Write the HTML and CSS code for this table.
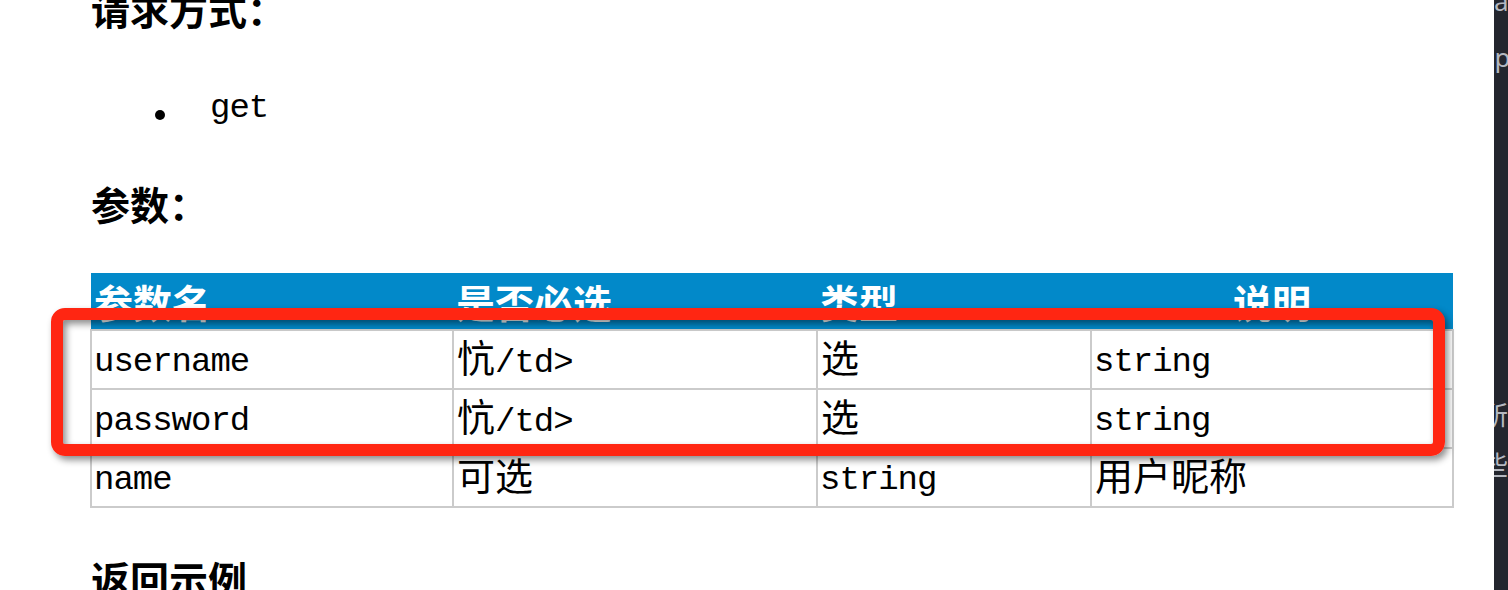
FILE: index.html
```html
<!DOCTYPE html>
<html lang="zh">
<head>
<meta charset="utf-8">
<title>接口文档</title>
<link rel="stylesheet" href="styles.css">
</head>
<body>
<div class="page">
  <main class="doc">
    <h3 class="h h-first">请求方式：</h3>
    <ul class="list"><li>get</li></ul>
    <h3 class="h h-params">参数：</h3>
    <table class="params">
      <colgroup>
        <col class="c1"><col class="c2"><col class="c3"><col class="c4">
      </colgroup>
      <thead>
        <tr><th>参数名</th><th>是否必选</th><th>类型</th><th class="center">说明</th></tr>
      </thead>
      <tbody>
        <tr><td>username</td><td><span class="zh">忼</span>/td&gt;</td><td><span class="zh">选</span></td><td>string</td></tr>
        <tr><td>password</td><td><span class="zh">忼</span>/td&gt;</td><td><span class="zh">选</span></td><td>string</td></tr>
        <tr><td>name</td><td><span class="zh">可选</span></td><td>string</td><td><span class="zh">用户昵称</span></td></tr>
      </tbody>
    </table>
    <h3 class="h h-return">返回示例</h3>
  </main>
  <aside class="side">
    <div class="side-line l1">ba</div>
    <div class="side-line l2">ap</div>
    <div class="side-line l3">所</div>
    <div class="side-line l4">些</div>
  </aside>
</div>
<div class="mark"></div>
</body>
</html>
```

FILE: styles.css
```css
html, body {
  margin: 0;
  padding: 0;
  background: #ffffff;
}

body {
  width: 1508px;
  height: 590px;
  overflow: hidden;
  position: relative;
  font-family: "Liberation Mono", "Noto Sans CJK SC", monospace;
  color: #000;
}

.page {
  display: flex;
  height: 590px;
}

.doc {
  flex: 1;
  padding-left: 90px;
  min-width: 0;
}

.h {
  margin: 0 0 0 1px;
  font-family: "Noto Sans CJK SC", sans-serif;
  font-size: 39px;
  line-height: 39px;
  font-weight: 700;
}

.h-first { margin-top: -11px; }
.h-params { margin-top: 56px; }
.h-return { margin-top: 51px; }

.list {
  list-style: none;
  margin: 60px 0 0 0;
  padding: 0;
}

.list li {
  display: flex;
  font-size: 34px;
  letter-spacing: -1px;
  line-height: 40px;
  height: 40px;
}

.list li::before {
  content: "";
  width: 10px;
  height: 10px;
  border-radius: 50%;
  background: #000;
  margin: 22px 45px 0 65px;
  flex: none;
}

.params {
  margin-top: 50px;
  border-collapse: collapse;
  table-layout: fixed;
  width: 1362px;
}

.c1 { width: 362px; }
.c2 { width: 364px; }
.c3 { width: 274px; }
.c4 { width: 362px; }

.params th {
  background: #0289c9;
  color: #fff;
  font-family: "Noto Sans CJK SC", sans-serif;
  font-weight: 700;
  font-size: 39px;
  line-height: 39px;
  height: 56px;
  box-sizing: border-box;
  padding: 9px 0 8px 3px;
  text-align: left;
  vertical-align: top;
  border: none;
}

.params th.center {
  text-align: center;
  padding-left: 0;
}

.params td {
  border: 2px solid #cbcbcb;
  font-size: 34px;
  letter-spacing: -1px;
  line-height: 50px;
  height: 56px;
  box-sizing: border-box;
  padding: 6px 0 0 2px;
  vertical-align: top;
  white-space: nowrap;
}

.zh {
  font-family: "Noto Sans CJK SC", sans-serif;
  font-size: 38px;
  letter-spacing: 0;
  line-height: 1;
  margin-left: 1px;
}

.side {
  width: 14px;
  flex: none;
  background: #23262e;
  overflow: hidden;
  color: #b4b8c0;
  font-family: "Noto Sans", "Noto Sans CJK SC", sans-serif;
  font-size: 26px;
}

.side-line {
  white-space: nowrap;
  line-height: 30px;
  height: 30px;
}

.l1 { margin: -14px 0 0 -16px; }
.l2 { margin: 26px 0 0 -14px; }
.l3 { margin: 328px 0 0 -12px; }
.l4 { margin: 20px 0 0 -12px; }

.mark {
  position: absolute;
  left: 51px;
  top: 308px;
  width: 1394px;
  height: 148px;
  box-sizing: border-box;
  border: 12px solid #ff2612;
  border-radius: 14px;
  box-shadow: 3px 4px 7px rgba(0, 0, 0, 0.45), inset 3px 4px 7px rgba(0, 0, 0, 0.45);
}
```
